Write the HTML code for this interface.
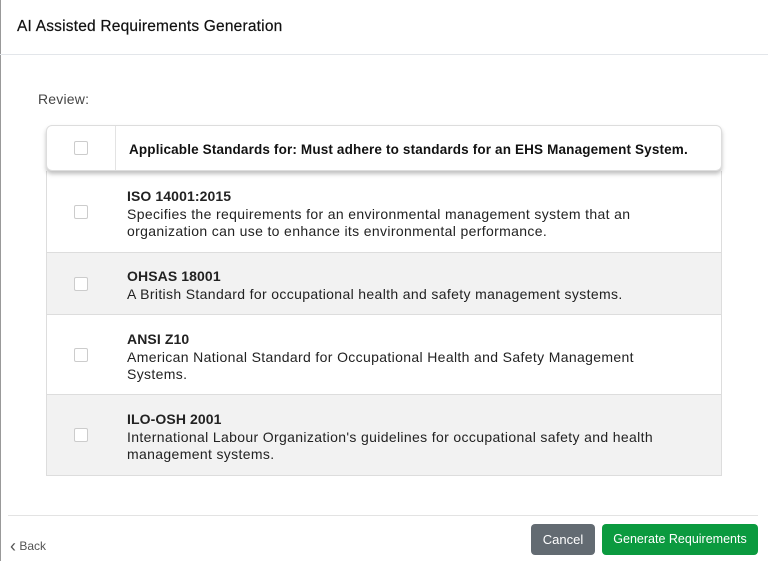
<!DOCTYPE html>
<html><head><style>
body{margin:0;width:768px;height:561px;background:#fff;font-family:"Liberation Sans",sans-serif;color:#222;position:relative;overflow:hidden}
.title{position:absolute;left:17px;top:18px;font-size:15.5px;color:#111;letter-spacing:0.2px;-webkit-text-stroke:0.2px #111}
.hl{position:absolute;left:0;right:0;top:54px;border-top:1px solid #e3e6ea}
.rev{position:absolute;left:38px;top:91px;font-size:14px;color:#444;letter-spacing:0.2px}
.tbl{position:absolute;left:46px;top:125px;width:676px}
.hdr{height:46px;box-sizing:border-box;background:#fff;border:1px solid #ddd;border-radius:6px;box-shadow:0 3px 4px rgba(0,0,0,.25);position:relative;z-index:2}
.hdr .cb{position:absolute;left:27px;top:15px}
.hdr .sep{position:absolute;left:68px;top:0;bottom:0;border-left:1px solid #e3e3e3}
.hdr .t{position:absolute;left:82px;top:16px;font-size:13.5px;font-weight:bold;color:#111;letter-spacing:0.15px}
.row{position:relative;border:1px solid #ddd;border-top:none;font-size:14px;line-height:17.5px;box-sizing:border-box;letter-spacing:0.35px}
.row .cb{position:absolute;left:27px}
.row .tx{position:absolute;left:80px;right:40px}
.row b{display:block;font-size:14px;letter-spacing:0.1px}
.cb{width:14px;height:14px;border:1px solid #ccc;border-radius:2px;background:#fff;box-sizing:border-box}
.fl{position:absolute;left:8px;right:10px;top:515px;border-top:1px solid #e3e3e3}
.back{position:absolute;left:10px;top:536px;font-size:12px;color:#555}
.back span{font-size:18px;vertical-align:-2px}
.btn{position:absolute;top:524px;height:31px;border-radius:4px;color:#fff;font-size:13px;line-height:31px;text-align:center}
</style></head><body>
<div style="position:absolute;left:0;top:0;width:1px;height:561px;background:#999"></div>
<div class="title">AI Assisted Requirements Generation</div>
<div class="hl"></div>
<div class="rev">Review:</div>
<div class="tbl">
<div class="hdr"><div class="cb"></div><div class="sep"></div><div class="t">Applicable Standards for: Must adhere to standards for an EHS Management System.</div></div>
<div class="row" style="height:82px;background:#fff"><div class="cb" style="top:34px"></div><div class="tx" style="top:17px"><b>ISO 14001:2015</b>Specifies the requirements for an environmental management system that an organization can use to enhance its environmental performance.</div></div>
<div class="row" style="height:62px;background:#f2f2f2"><div class="cb" style="top:24px"></div><div class="tx" style="top:15px"><b>OHSAS 18001</b>A British Standard for occupational health and safety management systems.</div></div>
<div class="row" style="height:80px;background:#fff"><div class="cb" style="top:33px"></div><div class="tx" style="top:16px;right:60px"><b>ANSI Z10</b>American National Standard for Occupational Health and Safety Management Systems.</div></div>
<div class="row" style="height:81px;background:#f2f2f2"><div class="cb" style="top:33px"></div><div class="tx" style="top:16px"><b>ILO-OSH 2001</b>International Labour Organization's guidelines for occupational safety and health management systems.</div></div>
</div>
<div class="fl"></div>
<div class="back"><span>&#8249;</span> Back</div>
<div class="btn" style="left:531px;width:64px;background:#636b72">Cancel</div>
<div class="btn" style="left:602px;width:156px;background:#0b9a3f;font-size:12.5px">Generate Requirements</div>
</body></html>
